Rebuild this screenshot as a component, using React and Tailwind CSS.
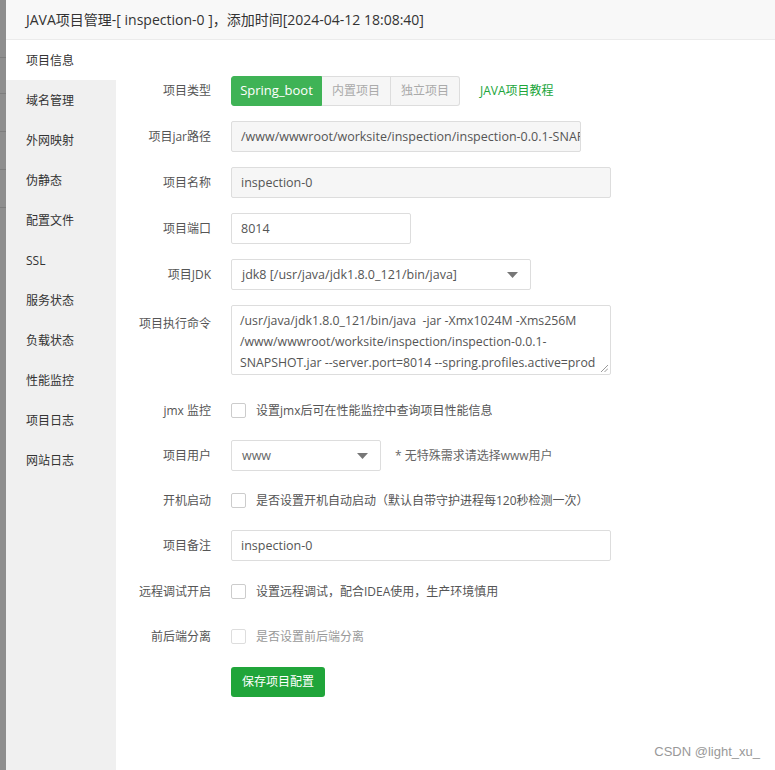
import React, { useState } from 'react';

const menu = ['项目信息', '域名管理', '外网映射', '伪静态', '配置文件', 'SSL', '服务状态', '负载状态', '性能监控', '项目日志', '网站日志'];

const font = { fontFamily: '"Open Sans", "Noto Sans CJK SC", sans-serif' };

function Label({ children }) {
    return <div className="w-[115px] shrink-0 text-right pr-[20px] text-[12px] text-[#555]">{children}</div>;
}

function Caret() {
    return (
        <svg width="11" height="6" viewBox="0 0 11 6" className="absolute right-[12px] top-1/2 -translate-y-1/2">
            <path d="M0 0h11L5.5 6z" fill="#777" />
        </svg>
    );
}

function Check({ disabled, children }) {
    return (
        <label className="flex items-center">
            <span className={`w-[15px] h-[15px] border rounded-[2px] bg-white ${disabled ? 'border-[#ddd]' : 'border-[#ccc]'}`} />
            <span className={`ml-[10px] text-[12px] ${disabled ? 'text-[#999]' : 'text-[#555]'}`}>{children}</span>
        </label>
    );
}

export default function App() {
    const [type, setType] = useState('Spring_boot');

    return (
        <div className="relative flex w-[775px] h-[770px] overflow-hidden bg-white" style={font}>
            {/* 背景遮罩 */}
            <div className="w-[6px] shrink-0 bg-[#8e8e8e] flex flex-col">
                <div className="h-[58px] border-b border-[#7d7d7d]" />
                <div className="h-[36px] border-b border-[#7d7d7d]" />
                <div className="h-[38px] border-b border-[#7d7d7d]" />
                <div className="h-[38px] border-b border-[#7d7d7d]" />
                <div className="h-[38px] border-b border-[#7d7d7d]" />
            </div>

            <div className="flex-1 flex flex-col">
                <header className="h-[40px] shrink-0 bg-[#f8f8f8] border-b border-[#ebebeb] flex items-center pl-[20px] text-[14px] text-[#333]">
                    JAVA项目管理-[ inspection-0 ]，添加时间[2024-04-12 18:08:40]
                </header>

                <div className="flex flex-1">
                    <aside className="w-[110px] shrink-0 bg-[#f0f0f0]">
                        {menu.map((m, i) => (
                            <div key={m} className={`h-[40px] flex items-center pl-[20px] pt-[1px] text-[12px] text-[#333] ${i === 0 ? 'bg-white' : ''}`}>{m}</div>
                        ))}
                    </aside>

                    <main className="flex-1 pt-[35px] text-[12.5px]">
                        <div className="flex items-center h-[31px] mb-[15px]">
                            <Label>项目类型</Label>
                            <div className="flex h-[30px] text-[12px]">
                                {['Spring_boot', '内置项目', '独立项目'].map((t, i) => (
                                    <button
                                        key={t}
                                        onClick={() => setType(t)}
                                        className={`h-full border ${i === 0 ? 'rounded-l-[3px] w-[91px] text-[13px]' : 'w-[69px] border-l-0'} ${i === 2 ? 'rounded-r-[3px]' : ''} ${type === t ? 'bg-[#3fb356] border-[#3fb356] text-white' : 'bg-[#f6f6f6] border-[#ddd] text-[#aaa]'}`}
                                    >
                                        {t}
                                    </button>
                                ))}
                            </div>
                            <a className="ml-[20px] text-[12px] text-[#20a53a]">JAVA项目教程</a>
                        </div>

                        <div className="flex items-center h-[31px] mb-[15px]">
                            <Label>项目jar路径</Label>
                            <div className="w-[350px] h-[31px] border border-[#ddd] bg-[#f6f6f6] rounded-[2px] pl-[9px] pt-[1px] flex items-center text-[#555] whitespace-nowrap overflow-hidden">
                                /www/wwwroot/worksite/inspection/inspection-0.0.1-SNAPSHOT.jar
                            </div>
                        </div>

                        <div className="flex items-center h-[31px] mb-[15px]">
                            <Label>项目名称</Label>
                            <div className="w-[380px] h-[31px] border border-[#ddd] bg-[#f6f6f6] rounded-[2px] px-[9px] pt-[1px] flex items-center text-[#555]">
                                inspection-0
                            </div>
                        </div>

                        <div className="flex items-center h-[31px] mb-[15px]">
                            <Label>项目端口</Label>
                            <div className="w-[180px] h-[31px] border border-[#ddd] bg-white rounded-[2px] px-[9px] pt-[1px] flex items-center text-[#555]">
                                8014
                            </div>
                        </div>

                        <div className="flex items-center h-[31px] mb-[15px]">
                            <Label>项目JDK</Label>
                            <div className="relative w-[300px] h-[31px] border border-[#ddd] bg-white rounded-[2px] px-[10px] pt-[1px] flex items-center text-[#555]">
                                jdk8 [/usr/java/jdk1.8.0_121/bin/java]
                                <Caret />
                            </div>
                        </div>

                        <div className="flex items-start mb-[20px]">
                            <div className="pt-[10px]"><Label>项目执行命令</Label></div>
                            <div className="relative w-[380px] h-[70px] border border-[#ddd] bg-white rounded-[2px] pl-[8px] pt-[4px] text-[12.3px] leading-[21px] text-[#555] whitespace-nowrap overflow-hidden">
                                /usr/java/jdk1.8.0_121/bin/java&nbsp; -jar -Xmx1024M -Xms256M<br />
                                /www/wwwroot/worksite/inspection/inspection-0.0.1-<br />
                                SNAPSHOT.jar --server.port=8014 --spring.profiles.active=prod
                                <svg width="7" height="7" viewBox="0 0 7 7" className="absolute right-[2px] bottom-[2px]">
                                    <path d="M7 0L0 7M7 3.5L3.5 7" stroke="#999" strokeWidth="1" />
                                </svg>
                            </div>
                        </div>

                        <div className="flex items-center h-[31px] mb-[14px]">
                            <Label>jmx 监控</Label>
                            <Check>设置jmx后可在性能监控中查询项目性能信息</Check>
                        </div>

                        <div className="flex items-center h-[31px] mb-[14px]">
                            <Label>项目用户</Label>
                            <div className="relative w-[150px] h-[31px] border border-[#ddd] bg-white rounded-[2px] px-[10px] pt-[2px] flex items-center text-[#666]">
                                www
                                <Caret />
                            </div>
                            <span className="ml-[14px] text-[12px] text-[#666]">* 无特殊需求请选择www用户</span>
                        </div>

                        <div className="flex items-center h-[31px] mb-[14px]">
                            <Label>开机启动</Label>
                            <Check>是否设置开机自动启动（默认自带守护进程每120秒检测一次）</Check>
                        </div>

                        <div className="flex items-center h-[31px] mb-[15px]">
                            <Label>项目备注</Label>
                            <div className="w-[380px] h-[31px] border border-[#ddd] bg-white rounded-[2px] px-[9px] pt-[1px] flex items-center text-[#555]">
                                inspection-0
                            </div>
                        </div>

                        <div className="flex items-center h-[31px] mb-[14px]">
                            <Label>远程调试开启</Label>
                            <Check>设置远程调试，配合IDEA使用，生产环境慎用</Check>
                        </div>

                        <div className="flex items-center h-[31px] mb-[15px]">
                            <Label>前后端分离</Label>
                            <Check disabled>是否设置前后端分离</Check>
                        </div>

                        <div className="flex items-center">
                            <div className="w-[115px] shrink-0" />
                            <button className="h-[30px] w-[94px] rounded-[3px] bg-[#20a53a] text-white text-[12px]">保存项目配置</button>
                        </div>
                    </main>
                </div>
            </div>

            <div className="absolute right-[15px] bottom-[9px] text-[13px] text-[#999]" style={{ fontFamily: '"Liberation Sans", sans-serif' }}>
                CSDN @light_xu_
            </div>
        </div>
    );
}
